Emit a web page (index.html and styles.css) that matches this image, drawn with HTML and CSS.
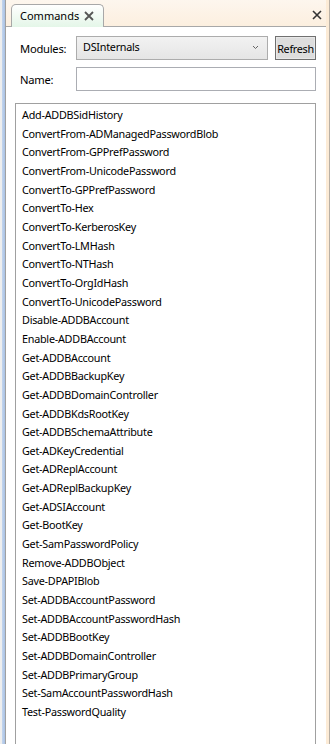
FILE: index.html
```html
<!DOCTYPE html>
<html lang="en">
<head>
  <meta charset="UTF-8" />
  <title>Commands</title>
  <link rel="stylesheet" href="styles.css">
</head>
<body>
  <div class="frame">
    <div class="edge-left"></div>

    <div class="main">
      <!-- Tab header -->
      <div class="header">
        <div class="tab">
          <span class="tab-title">Commands</span>
          <svg class="tab-close" width="10" height="10" viewBox="0 0 10 10">
            <path d="M1 1 L9 9 M9 1 L1 9" stroke="#555" stroke-width="1.8" fill="none" />
          </svg>
        </div>
        <svg class="pane-close" width="10" height="10" viewBox="0 0 10 10">
          <path d="M1 1 L9 9 M9 1 L1 9" stroke="#333" stroke-width="1.6" fill="none" />
        </svg>
      </div>

      <!-- Commands pane -->
      <div class="panel">
        <div class="row">
          <label class="label">Modules:</label>
          <div class="combo">
            <span>DSInternals</span>
            <svg width="7" height="5" viewBox="0 0 7 5">
              <path d="M1 1 L3.5 3.5 L6 1" stroke="#666" stroke-width="1" fill="none" />
            </svg>
          </div>
          <button class="refresh">Refresh</button>
        </div>

        <div class="row">
          <label class="label">Name:</label>
          <input class="name" type="text" />
        </div>

        <ul class="list">
          <li>Add-ADDBSidHistory</li>
          <li>ConvertFrom-ADManagedPasswordBlob</li>
          <li>ConvertFrom-GPPrefPassword</li>
          <li>ConvertFrom-UnicodePassword</li>
          <li>ConvertTo-GPPrefPassword</li>
          <li>ConvertTo-Hex</li>
          <li>ConvertTo-KerberosKey</li>
          <li>ConvertTo-LMHash</li>
          <li>ConvertTo-NTHash</li>
          <li>ConvertTo-OrgIdHash</li>
          <li>ConvertTo-UnicodePassword</li>
          <li>Disable-ADDBAccount</li>
          <li>Enable-ADDBAccount</li>
          <li>Get-ADDBAccount</li>
          <li>Get-ADDBBackupKey</li>
          <li>Get-ADDBDomainController</li>
          <li>Get-ADDBKdsRootKey</li>
          <li>Get-ADDBSchemaAttribute</li>
          <li>Get-ADKeyCredential</li>
          <li>Get-ADReplAccount</li>
          <li>Get-ADReplBackupKey</li>
          <li>Get-ADSIAccount</li>
          <li>Get-BootKey</li>
          <li>Get-SamPasswordPolicy</li>
          <li>Remove-ADDBObject</li>
          <li>Save-DPAPIBlob</li>
          <li>Set-ADDBAccountPassword</li>
          <li>Set-ADDBAccountPasswordHash</li>
          <li>Set-ADDBBootKey</li>
          <li>Set-ADDBDomainController</li>
          <li>Set-ADDBPrimaryGroup</li>
          <li>Set-SamAccountPasswordHash</li>
          <li>Test-PasswordQuality</li>
        </ul>
      </div>
    </div>

    <div class="edge-right"></div>
  </div>
</body>
</html>
```

FILE: styles.css
```css
html, body {
  margin: 0;
  height: 100%;
  overflow: hidden;
}
body {
  font-family: "Noto Sans", "Open Sans", sans-serif;
  font-size: 10.8px;
  letter-spacing: -0.25px;
  color: #000;
  background: #fdf3e6;
}
.frame {
  display: flex;
  height: 744px;
}
.edge-left {
  width: 3px;
  border-left: 2px solid #eeeeee;
  border-right: 1px solid #a0a0a0;
  background: linear-gradient(to right, #c4d6ee, #a9c1e4);
}
.edge-right {
  width: 3px;
  background: #fcebd6;
  border-right: 1px solid #b8b0a6;
}
.main {
  flex: 1;
  display: flex;
  flex-direction: column;
}

/* Tab header */
.header {
  height: 26px;
  display: flex;
  align-items: flex-end;
  position: relative;
  background: linear-gradient(to bottom, #fdf6ee, #fcefdf);
  border-bottom: 1px solid #a8a8a8;
}
.tab {
  margin-left: 5px;
  margin-bottom: -1px;
  height: 23px;
  width: 93px;
  box-sizing: border-box;
  display: flex;
  align-items: center;
  padding-left: 8px;
  gap: 5px;
  border: 1px solid #a8a8a8;
  border-bottom: none;
  border-radius: 5px 5px 0 0;
  background: linear-gradient(to bottom, #ffffff, #e4f6e8);
}
.tab-title {
  font-size: 11px;
  letter-spacing: 0;
  padding-bottom: 1px;
}
.pane-close {
  position: absolute;
  right: 4px;
  top: 10px;
}

/* Commands pane */
.panel {
  flex: 1;
  display: flex;
  flex-direction: column;
  background: #fff;
  padding: 9px 10px 0 9px;
  min-height: 0;
}
.row {
  display: flex;
  align-items: center;
  gap: 7px;
  height: 24px;
  margin-bottom: 7px;
}
.label {
  flex: 0 0 54px;
  box-sizing: border-box;
  padding-left: 5px;
  font-size: 11.2px;
}
.combo {
  flex: 1;
  height: 24px;
  box-sizing: border-box;
  display: flex;
  align-items: center;
  justify-content: space-between;
  padding: 0 8px 3px 6px;
  border: 1px solid #acacac;
  background: linear-gradient(to bottom, #f2f2f2, #e5e5e5);
}
.combo svg {
  margin-top: 2px;
}
.refresh {
  flex: 0 0 41px;
  height: 24px;
  padding: 0;
  font-family: inherit;
  font-size: 10.8px;
  letter-spacing: -0.3px;
  color: #000;
  border: 1px solid #707070;
  background: #dddddd;
  box-shadow: inset 0 0 0 1px #e8e8e8;
}
.name {
  flex: 1;
  min-width: 0;
  height: 24px;
  box-sizing: border-box;
  margin: 0;
  border: 1px solid #abadb3;
  background: #fff;
}
.list {
  flex: 1;
  list-style: none;
  margin: 5px 0 0 0;
  padding: 2px 0 0 6px;
  border: 1px solid #a0a0a0;
  border-bottom: none;
}
.list li {
  height: 18.66px;
  line-height: 18.66px;
  white-space: nowrap;
}
```
